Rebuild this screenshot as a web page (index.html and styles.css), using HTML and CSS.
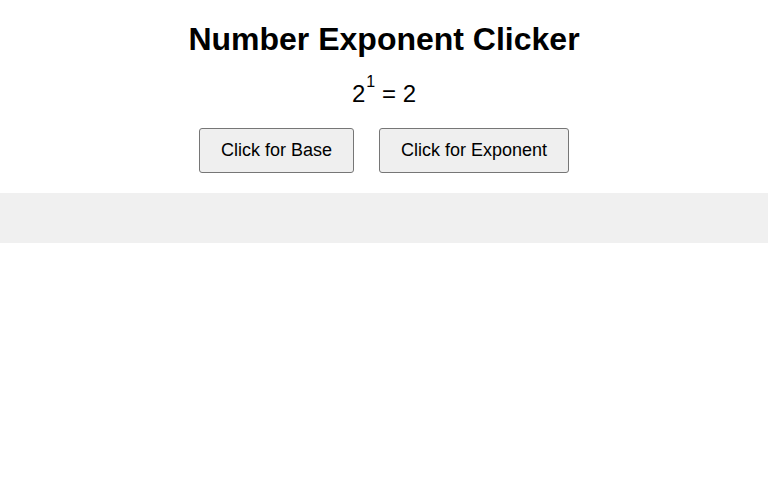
FILE: index.html
```html
<!DOCTYPE html>
<html lang="en">
<head>
    <meta charset="UTF-8">
    <meta name="viewport" content="width=device-width, initial-scale=1.0">
    <title>Number Exponent Clicker</title>
    <link rel="stylesheet" href="styles.css">
</head>
<body>
    <h1 class="title">Number Exponent Clicker</h1>
    <div class="equation"><span id="base">2</span><sup id="exponent">1</sup> = <span id="result">2</span></div>
    <div class="controls">
        <button id="base-btn" class="clicker">Click for Base</button>
        <button id="exp-btn" class="clicker">Click for Exponent</button>
    </div>
    <div class="footer-bar"></div>

    <script>
        const baseEl = document.getElementById('base');
        const expEl = document.getElementById('exponent');
        const resultEl = document.getElementById('result');
        let base = 2;
        let exponent = 1;

        function update() {
            baseEl.textContent = base;
            expEl.textContent = exponent;
            resultEl.textContent = Math.pow(base, exponent);
        }

        document.getElementById('base-btn').addEventListener('click', () => {
            base++;
            update();
        });
        document.getElementById('exp-btn').addEventListener('click', () => {
            exponent++;
            update();
        });
    </script>
</body>
</html>
```

FILE: styles.css
```css
body, html {
    margin: 0;
    padding: 0;
    font-family: "Liberation Sans", Arial, sans-serif;
    background-color: white;
    color: black;
}
.title {
    font-size: 32px;
    font-weight: bold;
    text-align: center;
    margin: 21px 0 22px;
}
.equation {
    font-size: 24px;
    line-height: 28px;
    text-align: center;
}
.equation sup {
    font-size: 16px;
    line-height: 0;
    vertical-align: 15px;
    margin-left: 1px;
}
.controls {
    display: flex;
    justify-content: center;
    gap: 25px;
    margin-top: 20px;
}
.clicker {
    font-family: "Liberation Sans", Arial, sans-serif;
    font-size: 18px;
    padding: 11px 21px;
    background-color: #efefef;
    color: black;
    border: 1px solid #767676;
    border-radius: 3px;
}
.footer-bar {
    height: 50px;
    margin-top: 20px;
    background-color: #f0f0f0;
}
```
